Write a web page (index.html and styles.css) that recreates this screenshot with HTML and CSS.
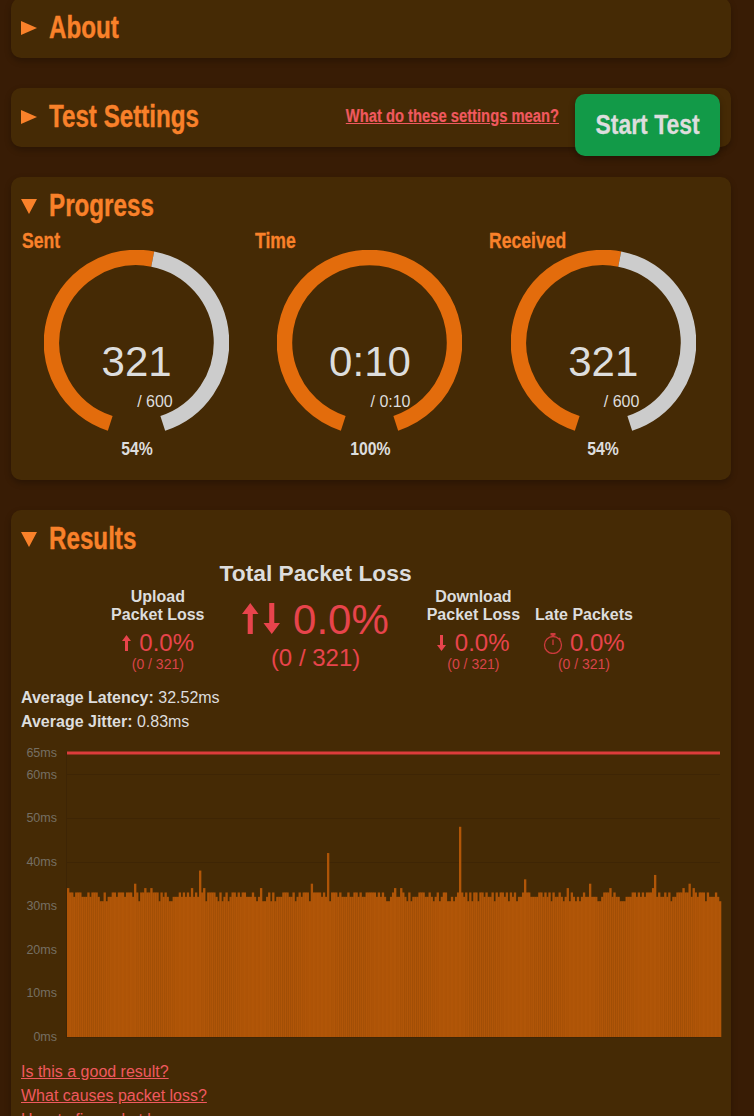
FILE: index.html
```html
<!DOCTYPE html>
<html lang="en">
<head>
<meta charset="utf-8">
<title>Packet Loss Test</title>
<link rel="stylesheet" href="styles.css">
</head>
<body>
<main class="page">
  <section class="card card-about"><h2 class="card-title"><span class="tri tri-right"></span><span class="squeeze">About</span></h2></section>

  <section class="card card-settings">
    <h2 class="card-title"><span class="tri tri-right"></span><span class="squeeze">Test Settings</span></h2>
    <a class="settings-link" href="#">What do these settings mean?</a>
    <button class="start-btn"><span class="squeeze-center">Start Test</span></button>
  </section>

  <section class="card card-progress">
    <h2 class="card-title"><span class="tri tri-down"></span><span class="squeeze">Progress</span></h2>
    <div class="gauges">
      <div class="gauge">
        <h3 class="gauge-label">Sent</h3>
        <div class="dial">
          <svg class="ring" viewBox="0 0 185 185" width="185" height="185"><path class="ring-on" d="M66.23 173.34A85 85 0 0 1 108.72 9.06"/><path class="ring-off" d="M108.72 9.06A85 85 0 0 1 118.77 173.34"/></svg>
          <div class="dial-text"><div class="dial-value">321</div><div class="dial-total">/ 600</div></div>
        </div>
        <div class="gauge-pct">54%</div>
      </div>
      <div class="gauge">
        <h3 class="gauge-label">Time</h3>
        <div class="dial">
          <svg class="ring" viewBox="0 0 185 185" width="185" height="185"><path class="ring-on" d="M66.23 173.34A85 85 0 1 1 118.77 173.34"/></svg>
          <div class="dial-text"><div class="dial-value">0:10</div><div class="dial-total">/ 0:10</div></div>
        </div>
        <div class="gauge-pct">100%</div>
      </div>
      <div class="gauge">
        <h3 class="gauge-label">Received</h3>
        <div class="dial">
          <svg class="ring" viewBox="0 0 185 185" width="185" height="185"><path class="ring-on" d="M66.23 173.34A85 85 0 0 1 108.72 9.06"/><path class="ring-off" d="M108.72 9.06A85 85 0 0 1 118.77 173.34"/></svg>
          <div class="dial-text"><div class="dial-value">321</div><div class="dial-total">/ 600</div></div>
        </div>
        <div class="gauge-pct">54%</div>
      </div>
    </div>
  </section>

  <section class="card card-results">
    <h2 class="card-title"><span class="tri tri-down"></span><span class="squeeze">Results</span></h2>
    <div class="stats">
      <div class="stat">
        <div class="stat-label">Upload<br>Packet Loss</div>
        <div class="stat-value"><svg class="arrow arrow-small" viewBox="0 0 9 16" width="9" height="16"><path d="M3 16V6H0L4.500 0 9 6H6V16z"/></svg> 0.0%</div>
        <div class="stat-sub">(0 / 321)</div>
      </div>
      <div class="stat stat-main">
        <div class="main-label">Total Packet Loss</div>
        <div class="main-value"><svg class="arrow arrow-big" viewBox="0 0 38 31" width="38" height="31"><path d="M5.700 31V11H0L8.250 0 16.500 11H10.800V31zM27.200 0V20H21.500L29.750 31 38 20H32.300V0z"/></svg> 0.0%</div>
        <div class="main-sub">(0 / 321)</div>
      </div>
      <div class="stat">
        <div class="stat-label">Download<br>Packet Loss</div>
        <div class="stat-value"><svg class="arrow arrow-small" viewBox="0 0 9 16" width="9" height="16"><path d="M3 0V10H0L4.500 16 9 10H6V0z"/></svg> 0.0%</div>
        <div class="stat-sub">(0 / 321)</div>
      </div>
      <div class="stat">
        <div class="stat-label">Late Packets</div>
        <div class="stat-value"><svg class="watch" viewBox="0 0 20 21" width="20" height="21"><circle cx="10" cy="12" r="8.500"/><path class="watch-crown" d="M7.500 1.200h5M10 1.500v2.200"/><path d="M10 12V6.500M16 5l1.500 1.500"/></svg> 0.0%</div>
        <div class="stat-sub">(0 / 321)</div>
      </div>
    </div>
    <p class="metric"><b>Average Latency:</b> 32.52ms</p>
    <p class="metric"><b>Average Jitter:</b> 0.83ms</p>
    <div class="chart">
      <div class="axis">
        <span class="tick tick-limit">65ms</span>
        <span class="tick tick-60">60ms</span>
        <span class="tick tick-50">50ms</span>
        <span class="tick tick-40">40ms</span>
        <span class="tick tick-30">30ms</span>
        <span class="tick tick-20">20ms</span>
        <span class="tick tick-10">10ms</span>
        <span class="tick tick-0">0ms</span>
      </div>
      <div class="plot" id="plot"></div>
    </div>
    <ul class="links">
      <li><a href="#">Is this a good result?</a></li>
      <li><a href="#">What causes packet loss?</a></li>
      <li><a href="#">How to fix packet loss</a></li>
    </ul>
  </section>
</main>
<script src="chart.js"></script>
</body>
</html>
```
FILE: styles.css
```css
html, body { height: 100%; overflow: hidden; }
body { margin: 0; background: #381c05; color: #ddd; font-family: "Liberation Sans", Arial, sans-serif; font-size: 16px; line-height: 24px; }
.page { padding: 0 23px 0 11px; margin-top: -2px; display: flex; flex-direction: column; gap: 30px; }
.card { background: #452a05; border-radius: 10px; padding: 0 10px; box-shadow: 0 3px 6px rgba(0,0,0,.25); }
.card-title { margin: 0; display: flex; align-items: center; gap: 12px; color: #f9812a; font-weight: 700; font-size: 31px; line-height: 36px; -webkit-text-stroke: .4px #f9812a; }
.squeeze { display: inline-block; transform: scaleX(.78); transform-origin: left center; white-space: nowrap; }
.squeeze-center { display: inline-block; transform: scaleX(.82); white-space: nowrap; }
.tri { width: 0; height: 0; display: block; }
.tri-right { border-left: 16px solid #f9812a; border-top: 7.500px solid transparent; border-bottom: 7.500px solid transparent; }
.tri-down { border-top: 15px solid #f9812a; border-left: 8px solid transparent; border-right: 8px solid transparent; }
.card-about { height: 60px; display: flex; align-items: center; }
.card-settings { height: 59px; display: flex; align-items: center; position: relative; }
.card-settings .card-title { margin-top: -2px; }
.settings-link { position: absolute; right: 172px; top: 16px; color: #f0595f; font-weight: 700; font-size: 18px; white-space: nowrap; transform: scaleX(.82); transform-origin: right center; -webkit-text-stroke: .2px #f0595f; }
.start-btn { position: absolute; right: 11px; top: 6px; width: 145px; height: 62px; border: 0; border-radius: 10px; background: #129a48; color: #ddd; font-family: "Liberation Sans", Arial, sans-serif; font-weight: 700; font-size: 28px; box-shadow: 0 3px 6px rgba(0,0,0,.3); -webkit-text-stroke: .3px #ddd; }
.card-progress { height: 303px; padding-top: 11px; box-sizing: border-box; }
.gauges { display: grid; grid-template-columns: repeat(3, 1fr); width: 700px; margin-left: -1px; margin-top: 4px; }
.gauge { display: flex; flex-direction: column; align-items: center; }
.gauge-label { align-self: flex-start; margin: 0 0 0 2px; color: #f9812a; font-weight: 700; font-size: 22px; line-height: 26px; white-space: nowrap; transform: scaleX(.8); transform-origin: left center; -webkit-text-stroke: .3px #f9812a; }
.dial { position: relative; width: 185px; height: 185px; margin-top: -4px; }
.ring { display: block; }
.ring path { fill: none; stroke-width: 15.500; }
.ring-on { stroke: #e36c0c; }
.ring-off { stroke: #ccc; }
.dial-text { position: absolute; inset: 0; }
.dial-value { position: absolute; left: 0; right: 0; top: 88px; text-align: center; font-size: 42px; line-height: 48px; color: #ddd; }
.dial-total { position: absolute; left: 93px; top: 140px; font-size: 16px; line-height: 24px; color: #ddd; white-space: nowrap; }
.gauge-pct { margin-top: 2px; font-weight: 700; font-size: 19px; color: #ddd; transform: scaleX(.83); }
.card-results { padding-top: 11px; }
.stats { display: flex; justify-content: center; align-items: flex-end; gap: 15px; margin-top: 3px; padding-left: 2px; }
.stat { text-align: center; display: flex; flex-direction: column; align-items: center; }
.stat-label { font-weight: 700; font-size: 16px; line-height: 18px; color: #ddd; white-space: nowrap; }
.stat-value { color: #e8444c; font-size: 24px; line-height: 28px; margin-top: 5px; white-space: nowrap; }
.stat-sub { color: #d9444a; font-size: 14px; line-height: 16px; margin-top: -1px; }
.arrow { fill: #e8444c; }
.arrow-small { margin-right: 2px; }
.arrow-big { margin-right: 1px; }
.watch { fill: none; stroke: #cc3a3c; stroke-width: 1.300; vertical-align: -3px; }
.watch-crown { stroke-width: 2.400; }
.main-label { font-weight: 700; font-size: 22.800px; line-height: 26px; color: #ddd; white-space: nowrap; }
.main-value { color: #e8444c; font-size: 42px; line-height: 48px; margin-top: 10px; white-space: nowrap; }
.main-sub { color: #e8444c; font-size: 24px; line-height: 28px; }
.metric { margin: 0; color: #ddd; }
.stats + .metric { margin-top: 14px; }
.chart { position: relative; height: 298px; margin-top: 12px; margin-left: -1px; }
.axis { position: absolute; left: 0; top: 0; width: 37px; height: 100%; }
.tick { position: absolute; right: 0; font-size: 12.500px; line-height: 14px; color: #756f63; }
.tick-limit { top: 0; } .tick-60 { top: 22px; } .tick-50 { top: 65px; } .tick-40 { top: 109px; } .tick-30 { top: 153px; } .tick-20 { top: 197px; } .tick-10 { top: 240px; } .tick-0 { top: 284px; }
.plot { position: absolute; left: 46px; top: 0; width: 656px; height: 292px; }
.plot svg { display: block; }
.links { list-style: none; margin: 16px 0 0; padding: 0; }
.links a { color: #f0595f; }
```
FILE: chart.js
```js
// Round-trip times per packet, one character per packet: 1 = 31ms ... 9 = 39ms, a = 40ms ... i = 48ms.
var samples = [
  '4 33 2 333 222 3 2 333 2 11 3 1 22 33 2 333 2 333 2 5 3 1 33 4 33 4 333 1 3 2 3 2 11 222 3 2 3 2 3 2 4 2 3 2 8 3 4 1 3333 2 1 3 1 2 3 1',
  '2 33 2 3 2 33 222 3 2 1 2 4 11 2 3 1 3 1 222 333 22 3 1 2 3 2 333 1 5 3333 2 3 2 c 1 333 2 3 222 3 22 33 2 3 22 33333 2 3 2 3 2 11 2 3',
  '4 22 4 3 2 1 3 1 222 333 22 3 2 1 2 3 1 2 33 11 2 1 2 3 i 3 2 3 1 3 1 33 1 33 2 3 22 3 1 3 2 33 2 3 1 3 2 3 1 22 3 6 33 2222 33 2 3 2 3 1 3 22',
  '3 2 1 2 4 1 3 2 1 2 1 2 3 22 5 2 22 11 2 333 4 2 3 22 111 222 33 2 3 2 3 2 333 4 7 2 3 22 3 2 3 1 22 333 4 33 5 2 4 3 2 333 1 3 222 3 2 1'
].join('').replace(/ /g, '');

function toMs(c) { return 30 + parseInt(c, 36); }

var base = 291, pxPerMs = 4.38, n = samples.length, step = 654 / n, bars = '';
for (var j = 0; j < n; j++) {
  var h = toMs(samples[j]) * pxPerMs;
  bars += '<rect x="' + (1 + j * step).toFixed(2) + '" y="' + (base - h).toFixed(2) + '" width="' + (step + 0.3).toFixed(2) + '" height="' + h.toFixed(2) + '" fill="' + (j % 2 ? '#b15608' : '#ae5407') + '"/>';
}
var grid = '';
for (var g = 0; g <= 6; g++) {
  var y = Math.round(291 - g * 43.8) + 0.5;
  grid += '<line x1="0" x2="654" y1="' + y + '" y2="' + y + '" stroke="#3e2505"/>';
}
document.getElementById('plot').innerHTML =
  '<svg width="656" height="292" viewBox="0 0 656 292">' + grid +
  '<line x1="0.5" x2="0.5" y1="6" y2="292" stroke="#3e2505"/>' + bars +
  '<rect x="1" y="5.500" width="653" height="3" fill="#dc3c3c"/></svg>';
```
